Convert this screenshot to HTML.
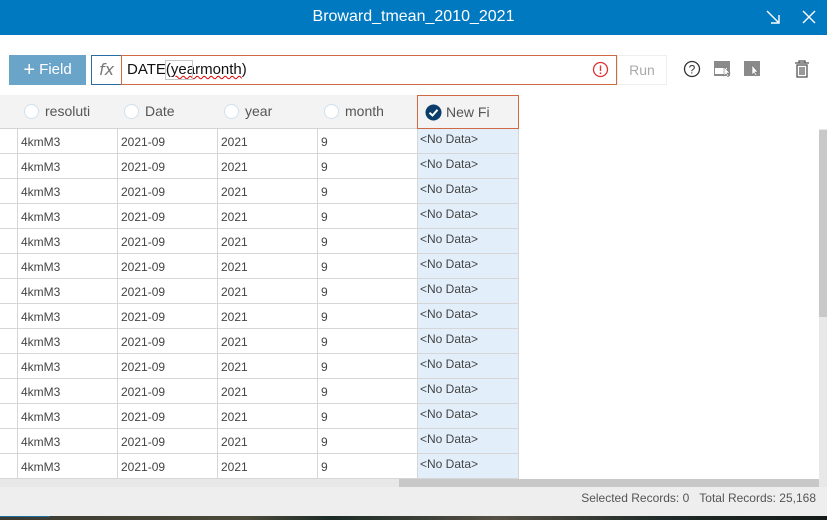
<!DOCTYPE html>
<html><head><meta charset="utf-8">
<style>
*{box-sizing:border-box;margin:0;padding:0}
body{width:827px;height:520px;overflow:hidden;background:#fff;font-family:"Liberation Sans",sans-serif;position:relative}
.a{position:absolute}
.title{left:0;top:0;width:827px;height:35px;background:#0079c1;color:#fff;font-size:16px;text-align:center;line-height:34px}
.cell{position:absolute;height:25px;border-right:1px solid #d6d6d6;border-bottom:1px solid #d6d6d6;font-size:12px;color:#444;padding-left:4px;line-height:26px}
.hd{position:absolute;top:95px;height:34px;background:#f3f3f3;border-right:1px solid #d3d3d3;border-bottom:1px solid #d3d3d3;font-size:14px;color:#555;line-height:33px;padding-left:28px;overflow:hidden;white-space:nowrap}
.hd .c{position:absolute;left:7px;top:9px;width:15px;height:15px;border:1px solid #cfe0ec;border-radius:50%;background:#fff}
.nd{background:#e2effa;font-size:12px;color:#444;padding-left:2px;line-height:20px}
</style></head><body>
<div class="a title">Broward_tmean_2010_2021</div>
<svg class="a" style="left:765px;top:9px" width="16" height="16"><path d="M2 2L14 14M14 6V14H6" stroke="#fff" stroke-width="1.4" fill="none"/></svg>
<svg class="a" style="left:802px;top:10px" width="14" height="14"><path d="M1 1L13 13M13 1L1 13" stroke="#fff" stroke-width="1.4"/></svg>

<div class="a" style="left:9px;top:55px;width:77px;height:30px;background:#6aa4c8;color:#fff;font-size:15px;line-height:29px;text-align:center"><span style="font-size:20px;vertical-align:-2px">+</span> Field</div>
<div class="a" style="left:91px;top:55px;width:31px;height:30px;border:1px solid #2b6ca3;color:#777;font-style:italic;font-size:16px;text-align:center;line-height:28px;font-family:'DejaVu Sans',sans-serif">fx</div>
<div class="a" style="left:121px;top:55px;width:496px;height:30px;border:1px solid #d06a45;font-size:15px;color:#111;line-height:28px;padding-left:5px">DATE(<span style="text-decoration:underline wavy #d00;text-decoration-thickness:1px">yearmonth</span>)</div>
<div class="a" style="left:165px;top:60px;width:28px;height:20px;border:1px solid #c8c8c8"></div>
<svg class="a" style="left:592px;top:61px" width="17" height="17"><circle cx="8.5" cy="8.5" r="7" fill="none" stroke="#d33" stroke-width="1.3"/><path d="M8.5 4.5V10" stroke="#d33" stroke-width="1.4"/><circle cx="8.5" cy="12.3" r=".9" fill="#d33"/></svg>
<div class="a" style="left:617px;top:55px;width:50px;height:30px;border:1px solid #eee;color:#aaa;font-size:14px;line-height:28px;text-align:center">Run</div>
<svg class="a" style="left:683px;top:60px" width="18" height="18"><circle cx="9" cy="9" r="7.5" fill="none" stroke="#333" stroke-width="1.3"/><text x="9" y="13.5" text-anchor="middle" font-size="12" font-family="Liberation Sans" fill="#333">?</text></svg>
<svg class="a" style="left:714px;top:61px" width="18" height="16"><rect x="0" y="0" width="16" height="15" fill="#8a8a8a"/><rect x="1" y="7" width="12" height="6" fill="#fff"/><path d="M10 6L10 15L12 13L14 16L15 15L13 12L16 12Z" fill="#fff" stroke="#777" stroke-width=".6"/></svg>
<svg class="a" style="left:744px;top:61px" width="18" height="16"><rect x="0" y="0" width="16" height="15" fill="#8a8a8a"/><path d="M8 4L8 14L10 12L12 15L13 14L11 11L14 11Z" fill="#fff" stroke="#777" stroke-width=".6"/></svg>
<svg class="a" style="left:794px;top:60px" width="16" height="18"><path d="M1 3H15M5 3V1H11V3" stroke="#555" stroke-width="1.3" fill="none"/><rect x="3" y="5" width="10" height="12" fill="none" stroke="#555" stroke-width="1.3"/><rect x="5" y="7" width="6" height="8" fill="#999"/></svg>

<div class="hd" style="left:0;width:18px;padding:0"></div>
<div class="hd" style="left:17px;width:101px"><span class="c"></span>resoluti</div>
<div class="hd" style="left:117px;width:101px"><span class="c"></span>Date</div>
<div class="hd" style="left:217px;width:101px"><span class="c"></span>year</div>
<div class="hd" style="left:317px;width:101px"><span class="c"></span>month</div>
<div class="hd" style="left:417px;width:102px;border:1px solid #d06a45;background:#f3f3f3;padding-left:28px;color:#555">
<svg style="position:absolute;left:7px;top:8px" width="17" height="17"><circle cx="8.5" cy="8.5" r="8" fill="#0b3d6b"/><path d="M4.5 8.8L7.5 11.5L12.5 5.8" stroke="#fff" stroke-width="2" fill="none"/></svg>New Fi</div>

<div id="rows"></div>
<script>
var h='';
for(var i=0;i<14;i++){var y=129+i*25;
h+='<div class="cell" style="left:0;top:'+y+'px;width:18px"></div>';
h+='<div class="cell" style="left:17px;top:'+y+'px;width:101px">4kmM3</div>';
h+='<div class="cell" style="left:117px;top:'+y+'px;width:101px">2021-09</div>';
h+='<div class="cell" style="left:217px;top:'+y+'px;width:101px">2021</div>';
h+='<div class="cell" style="left:317px;top:'+y+'px;width:101px">9</div>';
h+='<div class="cell nd" style="left:417px;top:'+y+'px;width:102px;border-left:1px solid #d6d6d6">&lt;No Data&gt;</div>';}
document.getElementById('rows').innerHTML=h;
</script>
<div class="a" style="left:819px;top:129px;width:8px;height:350px;background:#e8e8e8"></div>
<div class="a" style="left:819px;top:130px;width:8px;height:187px;background:#c8c8c8"></div>
<div class="a" style="left:0;top:479px;width:827px;height:8px;background:#e8e8e8"></div>
<div class="a" style="left:399px;top:479px;width:420px;height:8px;background:#c8c8c8"></div>
<div class="a" style="left:0;top:487px;width:827px;height:29px;background:#eeeeee;font-size:12px;color:#555;text-align:right;padding-right:11px;line-height:23px">Selected Records: 0&nbsp;&nbsp;&nbsp;Total Records: 25,168</div>
<div class="a" style="left:0;top:516px;width:827px;height:4px;background:linear-gradient(90deg,#3a3a30,#4a4a3a 30%,#1c2b26 40%,#555045 60%,#202a28 80%,#151a18)"></div>
<div class="a" style="left:0;top:516px;width:50px;height:1px;background:#1f6ea0"></div>
</body></html>
